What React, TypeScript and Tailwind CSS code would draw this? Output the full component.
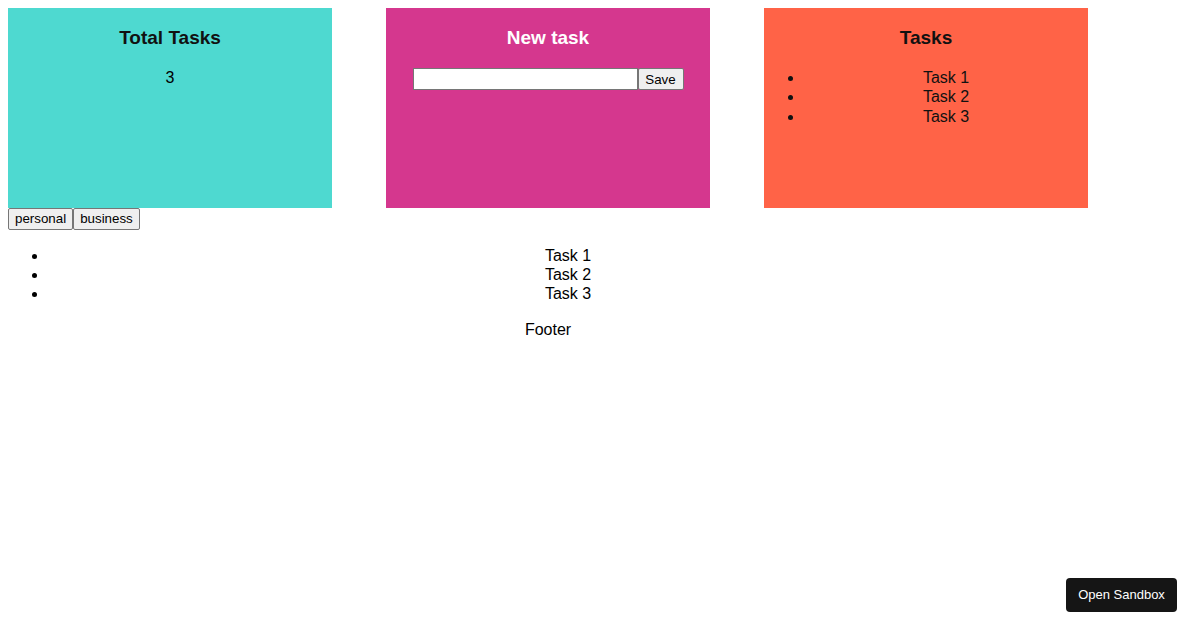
import { useState } from 'react';

const tasks = ['Task 1', 'Task 2', 'Task 3'];

const btn =
  'bg-[#efefef] border border-[#767676] rounded-[2px] px-[6px] h-[22px] text-[13.33px] leading-none text-black';

export default function App() {
  const [value, setValue] = useState('');

  return (
    <div className="min-h-[630px] bg-white p-2 font-['Liberation_Sans',Arial,sans-serif] text-base leading-[1.2] text-black">
      <div className="w-[1080px]">
        <div className="flex justify-between">
          <div className="h-[200px] w-[324px] bg-[#4ED9D0] pt-[18.72px] text-center">
            <h3 className="mb-[18.72px] text-[19px] font-bold text-[#111]">Total Tasks</h3>
            <p>3</p>
          </div>

          <div className="h-[200px] w-[324px] bg-[#D5378E] pt-[18.72px] text-center">
            <h3 className="mb-[18.72px] text-[19px] font-bold text-white">New task</h3>
            <form className="flex justify-center" onSubmit={(e) => e.preventDefault()}>
              <input
                value={value}
                onChange={(e) => setValue(e.target.value)}
                className="h-[22px] w-[225px] border border-[#767676] bg-white px-[2px] text-[13.33px]"
              />
              <button type="submit" className={btn + ' w-[46px]'}>Save</button>
            </form>
          </div>

          <div className="h-[200px] w-[324px] bg-[#FF6347] pt-[18.72px] text-center">
            <h3 className="mb-[18.72px] text-[19px] font-bold text-[#111]">Tasks</h3>
            <ul className="list-disc pl-10 text-[#111]">
              {tasks.map((t) => (
                <li key={t}>{t}</li>
              ))}
            </ul>
          </div>
        </div>

        <div className="flex">
          <button className={btn}>personal</button>
          <button className={btn}>business</button>
        </div>

        <ul className="my-4 list-disc pl-10 text-center">
          {tasks.map((t) => (
            <li key={t}>{t}</li>
          ))}
        </ul>

        <p className="text-center">Footer</p>
      </div>

      <button className="fixed bottom-[18px] right-[23px] h-[34px] w-[111px] rounded-[4px] bg-[#151515] text-[13px] text-white">
        Open Sandbox
      </button>
    </div>
  );
}
